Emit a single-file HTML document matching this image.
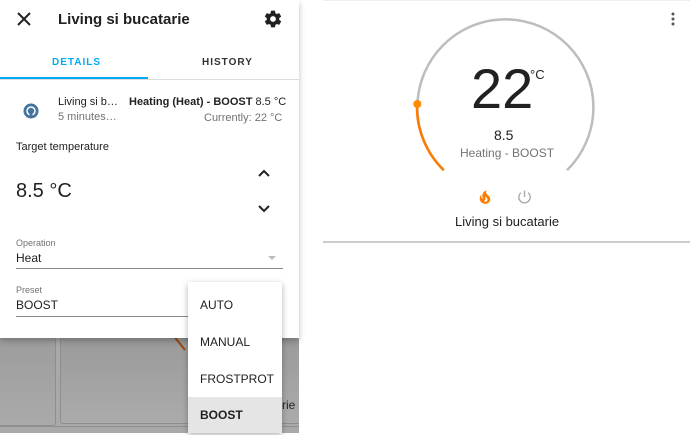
<!DOCTYPE html>
<html><head><style>
body{margin:0;width:690px;height:435px;background:#fff;font-family:"Liberation Sans",sans-serif;position:relative;overflow:hidden}
.a{position:absolute;white-space:nowrap}
</style></head><body>
<!-- left dialog -->
<div class="a" style="left:0;top:330px;width:299px;height:103px;background:#a9a9a9;overflow:hidden">
<div class="a" style="left:-4px;top:0;width:58px;height:94px;border:1px solid #8e8e8e;border-radius:3px;background:linear-gradient(#9c9c9c,#aaa)"></div>
<div class="a" style="left:60px;top:0;width:245px;height:92px;border:1px solid #8e8e8e;border-radius:3px;background:linear-gradient(#999,#ababab)"></div>
<div class="a" style="left:0;top:96px;width:299px;height:1px;background:#8e8e8e"></div>
<svg class="a" style="left:170px;top:5px" width="20" height="20"><line x1="3" y1="0" x2="15" y2="15" stroke="#9a4a10" stroke-width="2"/></svg>
<div class="a" style="left:282px;top:68px;font-size:12px;color:#222">rie</div>
</div>
<div class="a" style="left:0;top:0;width:299px;height:338px;background:#fff;box-shadow:0 3px 6px rgba(0,0,0,.25)"></div>
<svg class="a" style="left:17px;top:12px" width="14" height="14"><path d="M1 1L13 13M13 1L1 13" stroke="#222" stroke-width="2"/></svg>
<div class="a" style="left:58px;top:11px;font-size:15px;font-weight:bold;color:#212121">Living si bucatarie</div>
<svg class="a" style="left:263px;top:9px" width="20" height="20" viewBox="0 0 24 24"><path fill="#212121" d="M12 15.5A3.5 3.5 0 0 1 8.5 12 3.5 3.5 0 0 1 12 8.5a3.5 3.5 0 0 1 3.5 3.5 3.5 3.5 0 0 1-3.5 3.5m7.430-2.53c.04-.32.07-.64.07-.97 0-.33-.03-.66-.07-1l2.11-1.630c.19-.15.24-.42.12-.64l-2-3.460c-.12-.22-.39-.31-.61-.22l-2.49 1c-.52-.39-1.06-.73-1.69-.98l-.37-2.650A.506.506 0 0 0 14 2h-4c-.25 0-.46.18-.5.42l-.37 2.65c-.63.25-1.17.59-1.69.98l-2.49-1c-.22-.09-.49 0-.61.22l-2 3.46c-.13.22-.07.49.12.64L4.57 11c-.04.34-.07.67-.07 1 0 .33.03.65.07.97l-2.11 1.66c-.19.15-.25.42-.12.64l2 3.46c.12.22.39.3.61.22l2.49-1.01c.52.4 1.06.74 1.69.99l.37 2.65c.04.24.25.42.5.42h4c.25 0 .46-.18.5-.42l.37-2.65c.63-.26 1.17-.59 1.69-.99l2.49 1.01c.22.08.49 0 .61-.22l2-3.46c.12-.22.07-.49-.12-.64l-2.11-1.66z"/></svg>
<div class="a" style="left:52px;top:57px;font-size:10px;font-weight:bold;letter-spacing:1px;color:#03a9f4">DETAILS</div>
<div class="a" style="left:202px;top:57px;font-size:10px;font-weight:bold;letter-spacing:1px;color:#333">HISTORY</div>
<div class="a" style="left:0;top:79px;width:299px;height:1px;background:#ddd"></div>
<div class="a" style="left:0;top:77px;width:148px;height:2px;background:#03a9f4"></div>
<svg class="a" style="left:23px;top:103px" width="16" height="16"><circle cx="8" cy="8" r="7.5" fill="#44739e"/><circle cx="8" cy="8" r="4" fill="none" stroke="#fff" stroke-width="1.5"/><rect x="6.5" y="7" width="3" height="6" fill="#44739e"/></svg>
<div class="a" style="left:58px;top:96px;font-size:11px;color:#212121">Living si b…</div>
<div class="a" style="left:58px;top:111px;font-size:11px;color:#727272">5 minutes…</div>
<div class="a" style="left:129px;top:96px;font-size:11px;color:#212121"><b>Heating (Heat) - BOOST</b> 8.5 °C</div>
<div class="a" style="left:204px;top:112px;font-size:11px;color:#727272">Currently: 22 °C</div>
<div class="a" style="left:16px;top:141px;font-size:11px;color:#212121">Target temperature</div>
<div class="a" style="left:16px;top:180px;font-size:20px;color:#212121">8.5 °C</div>
<svg class="a" style="left:257px;top:168px" width="14" height="50"><path d="M2 8L7 3L12 8M2 38L7 43L12 38" fill="none" stroke="#222" stroke-width="2"/></svg>
<div class="a" style="left:16px;top:238px;font-size:9px;color:#727272">Operation</div>
<div class="a" style="left:16px;top:251px;font-size:12px;color:#212121">Heat</div>
<svg class="a" style="left:268px;top:256px" width="8" height="5"><path d="M0 0H8L4 4z" fill="#bbb"/></svg>
<div class="a" style="left:16px;top:268px;width:267px;height:1px;background:#888"></div>
<div class="a" style="left:16px;top:285px;font-size:9px;color:#727272">Preset</div>
<div class="a" style="left:16px;top:298px;font-size:12px;color:#212121">BOOST</div>
<div class="a" style="left:16px;top:316px;width:180px;height:1px;background:#888"></div>
<div class="a" style="left:188px;top:282px;width:94px;height:151px;background:#fff;box-shadow:0 2px 6px rgba(0,0,0,.3)">
<div class="a" style="left:12px;top:16px;font-size:12px;color:#212121">AUTO</div>
<div class="a" style="left:12px;top:53px;font-size:12px;color:#212121">MANUAL</div>
<div class="a" style="left:12px;top:90px;font-size:12px;color:#212121">FROSTPROT</div>
<div class="a" style="left:0;top:115px;width:94px;height:36px;background:#e5e5e5"></div>
<div class="a" style="left:12px;top:126px;font-size:12px;font-weight:bold;color:#212121">BOOST</div>
</div>
<!-- right card -->
<div class="a" style="left:323px;top:0;width:367px;height:1px;background:#eee"></div>
<div class="a" style="left:323px;top:241px;width:367px;height:2px;background:#ccc"></div>
<svg class="a" style="left:669px;top:12px" width="8" height="16"><circle cx="4" cy="2" r="1.5" fill="#555"/><circle cx="4" cy="7" r="1.5" fill="#555"/><circle cx="4" cy="12" r="1.5" fill="#555"/></svg>
<svg class="a" style="left:405px;top:8px" width="200" height="180">
<path d="M38.8 162.2 A88 88 0 1 1 162 162.2" fill="none" stroke="#bdbdbd" stroke-width="2.5"/>
<path d="M12 96 A88 88 0 0 0 38.8 162.2" fill="none" stroke="#ff7b00" stroke-width="2.5"/>
<circle cx="12.3" cy="96" r="4" fill="#ff8a00"/>
</svg>
<div class="a" style="left:471px;top:57px;font-size:56px;color:#212121;line-height:64px">22</div>
<div class="a" style="left:530px;top:67px;font-size:13px;color:#212121">°C</div>
<div class="a" style="left:494px;top:127px;font-size:14px;color:#212121">8.5</div>
<div class="a" style="left:460px;top:146px;font-size:12px;color:#737373">Heating - BOOST</div>
<svg class="a" style="left:476px;top:187px" width="18" height="20" viewBox="0 0 24 24"><path fill="#ff7b00" d="M17.66 11.2c-.23-.3-.51-.56-.77-.82-.67-.6-1.43-1.030-2.07-1.66C13.33 7.26 13 4.85 13.95 3c-.95.23-1.78.75-2.49 1.32-2.59 2.080-3.61 5.75-2.39 8.900.04.1.08.2.08.33 0 .22-.15.42-.35.5-.23.1-.47.04-.66-.12a.58.58 0 0 1-.14-.17c-1.13-1.43-1.31-3.48-.55-5.12C5.78 10 4.870 12.3 5 14.470c.06.5.12 1 .29 1.5.14.6.41 1.2.71 1.73 1.08 1.73 2.95 2.97 4.96 3.22 2.14.27 4.43-.12 6.07-1.6 1.83-1.66 2.47-4.32 1.530-6.6l-.13-.26c-.21-.46-.77-1.260-.77-1.26m-3.16 6.3c-.28.24-.74.5-1.1.6-1.12.4-2.24-.16-2.9-.82 1.19-.28 1.9-1.16 2.11-2.05.17-.8-.15-1.46-.28-2.23-.12-.74-.1-1.37.17-2.06.19.38.39.76.63 1.06.77 1 1.98 1.44 2.24 2.8.04.14.06.28.06.43.03.82-.33 1.72-.93 2.27z"/></svg>
<svg class="a" style="left:516px;top:188px" width="17" height="18" viewBox="0 0 24 24"><path fill="none" stroke="#aaa" stroke-width="2" d="M12 3v9M7 6a8 8 0 1 0 10 0"/></svg>
<div class="a" style="left:455px;top:214px;font-size:13px;color:#212121">Living si bucatarie</div>
</body></html>
